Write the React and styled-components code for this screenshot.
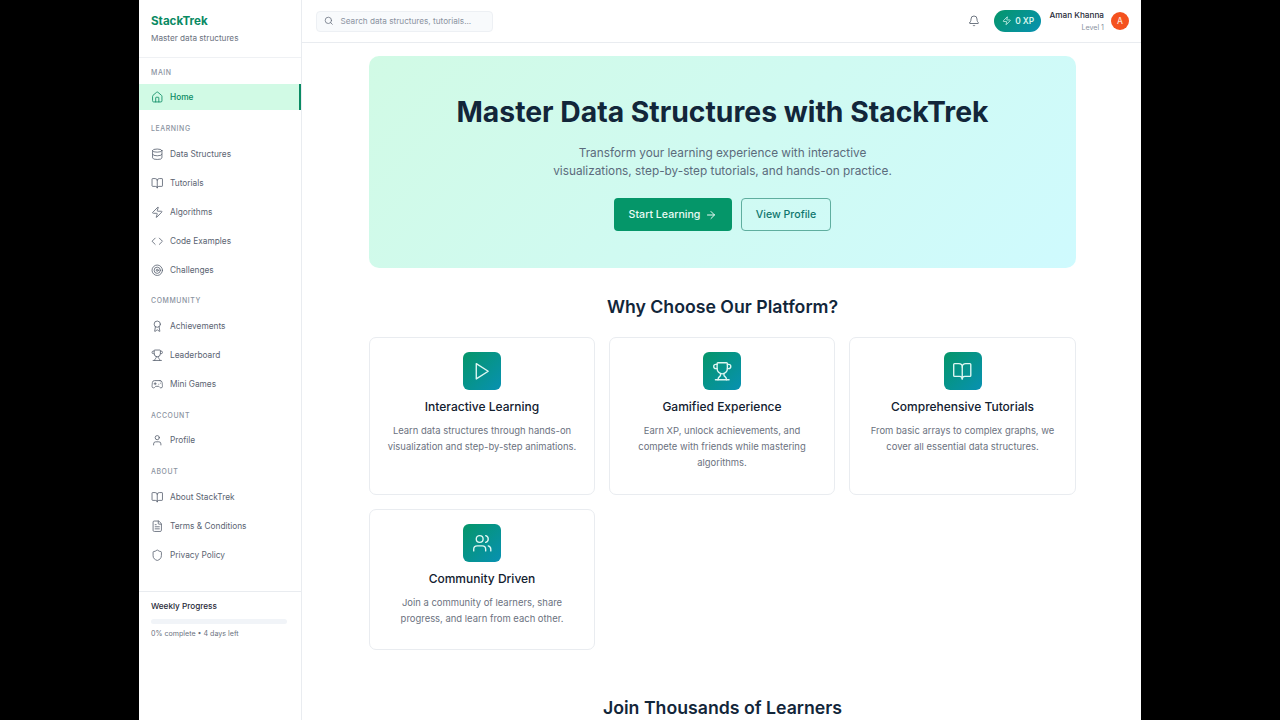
import React from "react";
import styled, { createGlobalStyle } from "styled-components";
import {
  Home, Database, BookOpen, Zap, Code, Target, Award, Trophy, Gamepad2, User,
  FileText, Shield, Search, Bell, ArrowRight, Users,
} from "lucide-react";

const GlobalStyle = createGlobalStyle`
  html, body { margin: 0; padding: 0; height: 100%; background: #000; overflow: hidden; }
  * { box-sizing: border-box; }
  body { font-family: Inter, "Liberation Sans", sans-serif; }
`;

const Stage = styled.div`
  display: flex;
  justify-content: center;
  height: 720px;
  background: #000;
`;

const Frame = styled.div`
  display: flex;
  width: 1002px;
  height: 720px;
  background: #fff;
  overflow: hidden;
`;

const Sidebar = styled.aside`
  display: flex;
  flex-direction: column;
  width: 163px;
  flex: none;
  border-right: 1px solid #e9ecf0;
`;

const Brand = styled.div`
  height: 58px;
  padding: 13px 12px 0;
  border-bottom: 1px solid #eff1f4;
`;

const BrandName = styled.div`
  font-size: 11.6px;
  line-height: 16px;
  font-weight: 700;
  color: #0a8a63;
`;

const BrandTag = styled.div`
  margin-top: 1.5px;
  font-size: 8.2px;
  line-height: 14px;
  color: #6b7280;
`;

const Nav = styled.nav`
  flex: 1;
  display: flex;
  flex-direction: column;
`;

const SectionLabel = styled.div`
  height: 12px;
  margin-top: ${(p) => p.$top}px;
  margin-bottom: ${(p) => p.$bottom}px;
  padding-left: 12px;
  font-size: 6.9px;
  line-height: 12px;
  font-weight: 500;
  letter-spacing: 0.6px;
  color: #8b93a1;
`;

const NavItem = styled.div`
  display: flex;
  align-items: center;
  gap: 6.5px;
  height: 26px;
  margin-bottom: 3px;
  padding-left: 12px;
  font-size: 8.3px;
  font-weight: ${(p) => (p.$active ? 500 : 400)};
  color: ${(p) => (p.$active ? "#0a8a63" : "#5b6472")};
  background: ${(p) => (p.$active ? "#d1fae5" : "transparent")};
  border-right: ${(p) => (p.$active ? "2px solid #0a8a63" : "none")};
  svg { width: 12.5px; height: 12.5px; stroke-width: 1.6; flex: none; }
`;

const ProgressBox = styled.div`
  height: 129px;
  padding: 8px 14px 0 12px;
  border-top: 1px solid #e9ecf0;
`;

const ProgressTitle = styled.div`
  font-size: 8.2px;
  line-height: 12px;
  font-weight: 500;
  color: #1f2937;
`;

const ProgressTrack = styled.div`
  height: 5px;
  margin-top: 7px;
  border-radius: 3px;
  background: #f1f4f8;
`;

const ProgressText = styled.div`
  margin-top: 4px;
  font-size: 7.1px;
  line-height: 11px;
  color: #6b7280;
`;

const Main = styled.div`
  flex: 1;
  display: flex;
  flex-direction: column;
  min-width: 0;
`;

const Topbar = styled.header`
  display: flex;
  align-items: center;
  justify-content: space-between;
  height: 43px;
  flex: none;
  padding: 0 12px 0 14px;
  border-bottom: 1px solid #e9ecf0;
`;

const SearchBox = styled.div`
  display: flex;
  align-items: center;
  gap: 7px;
  width: 177px;
  height: 21px;
  padding-left: 7px;
  font-size: 8.2px;
  color: #8b93a1;
  background: #f8fafc;
  border: 1px solid #edf0f4;
  border-radius: 4px;
  svg { width: 9.5px; height: 9.5px; color: #6b7280; }
`;

const TopRight = styled.div`
  display: flex;
  align-items: center;
`;

const BellButton = styled.div`
  display: flex;
  margin-right: 14px;
  color: #4b5563;
  svg { width: 12px; height: 12px; stroke-width: 1.6; }
`;

const XpPill = styled.div`
  display: flex;
  align-items: center;
  justify-content: center;
  gap: 4px;
  width: 47px;
  height: 22px;
  margin-right: 8px;
  border-radius: 11px;
  font-size: 8.4px;
  font-weight: 600;
  color: #d8f6ee;
  background: linear-gradient(135deg, #059669, #0891b2);
  svg { width: 9.5px; height: 9.5px; }
`;

const UserBlock = styled.div`
  text-align: right;
  margin: 1px 7px 0 0;
`;

const UserName = styled.div`
  font-size: 8.2px;
  line-height: 11px;
  font-weight: 500;
  color: #1f2937;
`;

const UserLevel = styled.div`
  margin-top: 1.5px;
  font-size: 7.1px;
  line-height: 10px;
  color: #8b93a1;
`;

const Avatar = styled.div`
  display: flex;
  align-items: center;
  justify-content: center;
  width: 18px;
  height: 18px;
  border-radius: 50%;
  font-size: 8.4px;
  font-weight: 500;
  color: #ffe3d6;
  background: #f4511e;
`;

const Content = styled.main`
  flex: 1;
  overflow: hidden;
  padding: 13px 65px 0 67px;
`;

const Hero = styled.section`
  display: flex;
  flex-direction: column;
  align-items: center;
  height: 212px;
  padding-top: 38px;
  border-radius: 10px;
  background: linear-gradient(135deg, #d1fae5, #cffafe);
`;

const HeroTitle = styled.h1`
  margin: 0;
  font-size: 28.3px;
  line-height: 36px;
  font-weight: 700;
  color: #12263a;
`;

const HeroText = styled.p`
  margin: 13.5px 0 0;
  font-size: 11.8px;
  line-height: 18px;
  text-align: center;
  color: #5b6b7c;
`;

const HeroActions = styled.div`
  display: flex;
  gap: 9px;
  margin-top: 18.5px;
`;

const PrimaryButton = styled.div`
  display: flex;
  align-items: center;
  justify-content: center;
  gap: 5px;
  width: 118px;
  height: 33px;
  border-radius: 4px;
  font-size: 10.6px;
  font-weight: 500;
  color: #eafbf5;
  background: #059669;
  svg { width: 12px; height: 12px; }
`;

const OutlineButton = styled.div`
  display: flex;
  align-items: center;
  justify-content: center;
  width: 90px;
  height: 33px;
  border-radius: 4px;
  font-size: 10.6px;
  font-weight: 500;
  color: #0f766e;
  border: 1px solid #5fae9f;
`;

const SectionTitle = styled.h2`
  margin: ${(p) => p.$top}px 0 0;
  font-size: 17.7px;
  line-height: 24px;
  font-weight: 600;
  text-align: center;
  color: #12263a;
`;

const CardGrid = styled.div`
  display: grid;
  grid-template-columns: 226px 226px 1fr;
  gap: 14px;
  margin-top: 18px;
`;

const Card = styled.article`
  display: flex;
  flex-direction: column;
  align-items: center;
  height: ${(p) => p.$height}px;
  padding-top: 14px;
  text-align: center;
  background: #fff;
  border: 1px solid #e9ecf0;
  border-radius: 7px;
`;

const CardIcon = styled.div`
  display: flex;
  align-items: center;
  justify-content: center;
  width: 38px;
  height: 38px;
  border-radius: 6px;
  color: #dff7f2;
  background: linear-gradient(135deg, #059669, #0891b2);
  svg { width: 20.5px; height: 20.5px; stroke-width: 1.6; }
`;

const CardTitle = styled.h3`
  margin: 8.5px 0 0;
  font-size: 12px;
  line-height: 16px;
  font-weight: 500;
  color: #12202f;
`;

const CardText = styled.p`
  margin: 8px 0 0;
  padding: 0 15px;
  font-size: 9.45px;
  line-height: 16.4px;
  color: #6b7280;
`;

// the play triangle in the reference has sharp corners, unlike lucide's rounded one
const PlayIcon = () => (
  <svg viewBox="0 0 24 24" fill="none" stroke="currentColor" strokeLinecap="round" strokeLinejoin="round">
    <polygon points="5 3 19 12 5 21 5 3" />
  </svg>
);

const navSections = [
  { label: "MAIN", top: 8.5, bottom: 5.5, items: [{ icon: Home, text: "Home", active: true }] },
  {
    label: "LEARNING", top: 10, bottom: 6,
    items: [
      { icon: Database, text: "Data Structures" },
      { icon: BookOpen, text: "Tutorials" },
      { icon: Zap, text: "Algorithms" },
      { icon: Code, text: "Code Examples" },
      { icon: Target, text: "Challenges" },
    ],
  },
  {
    label: "COMMUNITY", top: 9, bottom: 6,
    items: [
      { icon: Award, text: "Achievements" },
      { icon: Trophy, text: "Leaderboard" },
      { icon: Gamepad2, text: "Mini Games" },
    ],
  },
  { label: "ACCOUNT", top: 10, bottom: 5, items: [{ icon: User, text: "Profile" }] },
  {
    label: "ABOUT", top: 10, bottom: 6,
    items: [
      { icon: BookOpen, text: "About StackTrek" },
      { icon: FileText, text: "Terms & Conditions" },
      { icon: Shield, text: "Privacy Policy" },
    ],
  },
];

const features = [
  { icon: PlayIcon, title: "Interactive Learning", text: "Learn data structures through hands-on visualization and step-by-step animations.", height: 158 },
  { icon: Trophy, title: "Gamified Experience", text: "Earn XP, unlock achievements, and compete with friends while mastering algorithms.", height: 158 },
  { icon: BookOpen, title: "Comprehensive Tutorials", text: "From basic arrays to complex graphs, we cover all essential data structures.", height: 158 },
  { icon: Users, title: "Community Driven", text: "Join a community of learners, share progress, and learn from each other.", height: 141 },
];

export default function App() {
  return (
    <>
      <GlobalStyle />
      <Stage>
        <Frame>
          <Sidebar>
            <Brand>
              <BrandName>StackTrek</BrandName>
              <BrandTag>Master data structures</BrandTag>
            </Brand>
            <Nav>
              {navSections.map((section) => (
                <React.Fragment key={section.label}>
                  <SectionLabel $top={section.top} $bottom={section.bottom}>{section.label}</SectionLabel>
                  {section.items.map((item) => (
                    <NavItem key={item.text} $active={item.active}>
                      <item.icon />
                      {item.text}
                    </NavItem>
                  ))}
                </React.Fragment>
              ))}
            </Nav>
            <ProgressBox>
              <ProgressTitle>Weekly Progress</ProgressTitle>
              <ProgressTrack />
              <ProgressText>0% complete • 4 days left</ProgressText>
            </ProgressBox>
          </Sidebar>
          <Main>
            <Topbar>
              <SearchBox>
                <Search />
                Search data structures, tutorials...
              </SearchBox>
              <TopRight>
                <BellButton><Bell /></BellButton>
                <XpPill><Zap />0 XP</XpPill>
                <UserBlock>
                  <UserName>Aman Khanna</UserName>
                  <UserLevel>Level 1</UserLevel>
                </UserBlock>
                <Avatar>A</Avatar>
              </TopRight>
            </Topbar>
            <Content>
              <Hero>
                <HeroTitle>Master Data Structures with StackTrek</HeroTitle>
                <HeroText>
                  Transform your learning experience with interactive<br />
                  visualizations, step-by-step tutorials, and hands-on practice.
                </HeroText>
                <HeroActions>
                  <PrimaryButton>Start Learning <ArrowRight /></PrimaryButton>
                  <OutlineButton>View Profile</OutlineButton>
                </HeroActions>
              </Hero>
              <SectionTitle $top={27}>Why Choose Our Platform?</SectionTitle>
              <CardGrid>
                {features.map((f) => (
                  <Card key={f.title} $height={f.height}>
                    <CardIcon><f.icon /></CardIcon>
                    <CardTitle>{f.title}</CardTitle>
                    <CardText>{f.text}</CardText>
                  </Card>
                ))}
              </CardGrid>
              <SectionTitle $top={46}>Join Thousands of Learners</SectionTitle>
            </Content>
          </Main>
        </Frame>
      </Stage>
    </>
  );
}
